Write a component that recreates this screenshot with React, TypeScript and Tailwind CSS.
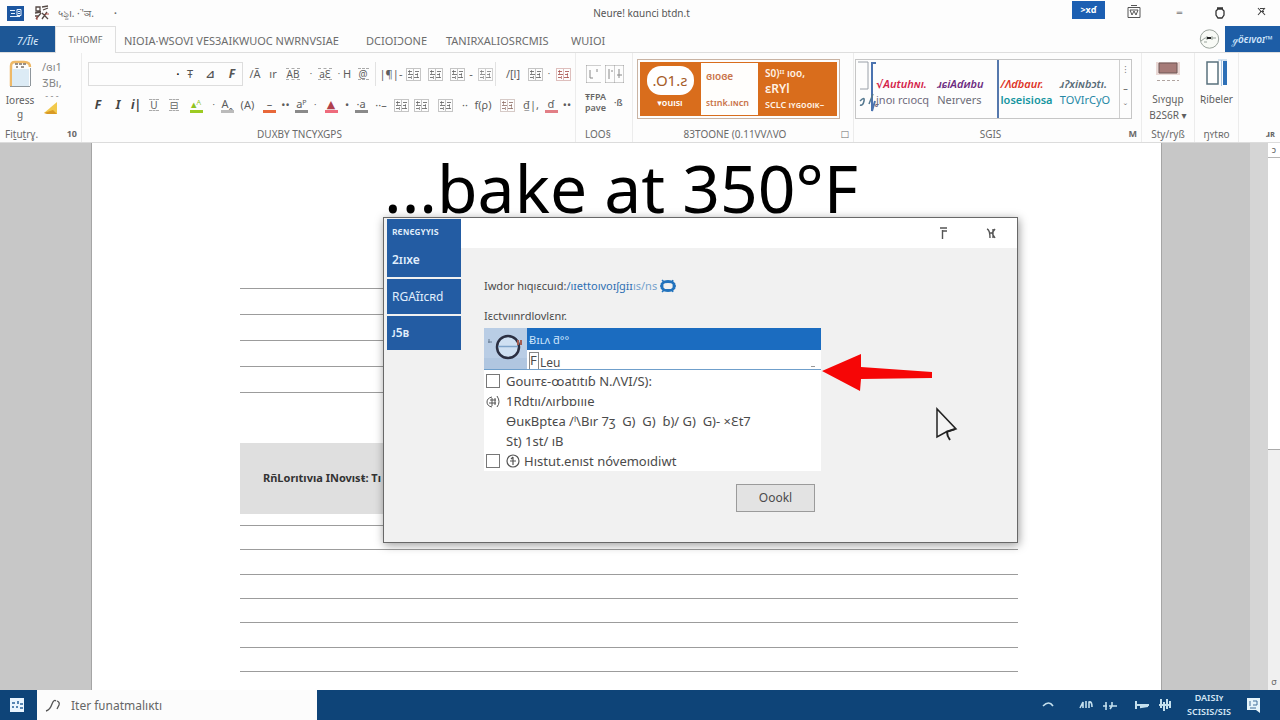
import React from "react";

type Tool = { w: string; t?: string; k?: "grid" | "sep" | "dot" | "bold" | "box"; bar?: string; c?: string };

const fontTop: Tool[] = [
  { w: "w-6", t: "/Ã" },
  { w: "w-3", t: "ır" },
  { w: "w-7", t: "AB", k: "box" },
  { w: "w-2", k: "dot" },
  { w: "w-5", t: "aƐ", k: "box" },
  { w: "w-2", k: "dot" },
  { w: "w-2", t: "H" },
  { w: "w-6", t: "@", k: "box" },
  { w: "w-1", k: "sep" },
  { w: "w-6", t: "|¶|-" },
  { w: "w-5", k: "grid" },
  { w: "w-6", k: "grid" },
  { w: "w-5", k: "grid" },
  { w: "w-2", t: "-" },
  { w: "w-5", k: "grid", c: "text-[#777777]" },
  { w: "w-1", k: "sep" },
  { w: "w-7", t: "/[l]" },
  { w: "w-4", k: "grid" },
  { w: "w-3", k: "dot" },
  { w: "w-4", k: "grid", c: "text-[#a34a44]" },
];

const fontBottom: Tool[] = [
  { w: "w-5", t: "F", k: "bold" },
  { w: "w-5", t: "I", k: "bold" },
  { w: "w-4", t: "i|", k: "bold" },
  { w: "w-5", t: "U", k: "box" },
  { w: "w-5", t: "⊟", k: "box" },
  { w: "w-6", t: "▴ᴬ", c: "text-[#8fc31f]", bar: "bg-[#9ccb22]" },
  { w: "w-3", k: "dot" },
  { w: "w-4", t: "Aꞈ", bar: "bg-[#bbbbbb]" },
  { w: "w-6", t: "(A)" },
  { w: "w-5", t: "–", bar: "bg-[#e8683a]" },
  { w: "w-3", t: "••" },
  { w: "w-5", t: "aᴾ", bar: "bg-[#8a8a8a]" },
  { w: "w-2", k: "dot" },
  { w: "w-6", t: "▲", c: "text-[#b0404c]", bar: "bg-[#ee6b7c]" },
  { w: "w-2", t: "•" },
  { w: "w-5", t: "·a", bar: "bg-[#8a8a8a]" },
  { w: "w-5", t: "··–" },
  { w: "w-5", k: "grid" },
  { w: "w-5", k: "grid" },
  { w: "w-7", k: "grid" },
  { w: "w-3", t: "··" },
  { w: "w-6", t: "f(ρ)" },
  { w: "w-6", k: "grid", c: "text-[#8c6a62]" },
  { w: "w-6", t: "₫|," },
  { w: "w-4", t: "ɗ", bar: "bg-[#e27f86]" },
  { w: "w-4", t: "••" },
];

function GridIcon() {
  return (
    <svg width="17" height="15" viewBox="0 0 17 15" fill="none" stroke="currentColor" aria-hidden="true">
      <path d="M1 1.5h15M1 13.5h15" opacity=".35" />
      <path d="M3 4.5h4M10 4.5h4M3 7.500h5M10 7.500h3M3 10.500h3M9 10.500h5" opacity=".8" />
      <path d="M1.500 2v11M8.500 2v11M15.500 2v11" opacity=".35" />
      <path d="M4.500 3v4M12.500 6v5M6.500 9v3" opacity=".6" />
    </svg>
  );
}

function ToolCell({ tool, name }: { tool: Tool; name: string }) {
  if (tool.k === "sep") return <span className={`${tool.w} h-6 border-l border-[#e2e2e2]`} />;
  if (tool.k === "dot") return <span className={`${tool.w} text-center text-[9px] text-[#666666]`}>·</span>;
  return (
    <button
      aria-label={name}
      className={`${tool.w} ${tool.c ?? "text-[#5d5d5d]"} flex h-5 shrink-0 flex-col items-center justify-center overflow-hidden whitespace-nowrap text-[11px] leading-3`}
    >
      {tool.k === "grid" ? (
        <GridIcon />
      ) : tool.k === "bold" ? (
        <span className="text-[12px] font-bold text-[#444444] italic">{tool.t}</span>
      ) : tool.k === "box" ? (
        <span className="border-y border-dashed border-[#aaaaaa] px-px text-[10px] leading-[10px]">{tool.t}</span>
      ) : (
        tool.t
      )}
      {tool.bar && <span className={`${tool.bar} h-[3px] w-[13px] shrink-0`} />}
    </button>
  );
}

function Group({
  className,
  label,
  mark,
  labelClass = "justify-center",
  children,
}: {
  className: string;
  label: string;
  mark?: string;
  labelClass?: string;
  children?: React.ReactNode;
}) {
  return (
    <section className={`flex shrink-0 flex-col border-r border-[#ececec] ${className}`}>
      <div className="flex-1 pt-[6px]">{children}</div>
      <div className={`relative flex h-4 items-center text-[10px] leading-4 text-[#6a6a6a] ${labelClass}`}>
        {label}
        {mark && <span className="absolute right-1 text-[9px] font-bold">{mark}</span>}
      </div>
    </section>
  );
}

function TitleBar() {
  return (
    <header className="flex h-[26px] items-center justify-between bg-[#fdfdfd]">
      <div className="flex flex-1 items-center pl-[7px] text-[#666666]">
        <svg width="17" height="15" viewBox="0 0 17 15" aria-hidden="true">
          <path fill="#1c56a0" d="M0 0h17v15H0z" />
          <path stroke="#e6f0fc" d="M3 4.5h5M4 7.5h4M3 10.5h10M10 3.5h4v6h-4zM11 5.5h2M11 7.5h2" fill="none" />
        </svg>
        <svg className="ml-[10px]" width="16" height="16" viewBox="0 0 16 16" fill="none" stroke="#564a46" aria-hidden="true">
          <path d="M2 2h4v4H2zM8 2l6-1M9 5l5-2M1 8l6-1M2 14l5-6M8 8l6 6M13 7l-5 7M1 11h4" strokeWidth="1.3" />
          <path d="M3 11v4M11 9h4" stroke="#b55249" />
        </svg>
        <span className="ml-2 text-[10px]">५ৡı. ·˙'ञ.</span>
        <span className="ml-5 text-[10px] font-bold">·</span>
      </div>
      <h1 className="pr-1 text-[10px] text-[#555555]">Neure! kαunci btdn.t</h1>
      <div className="flex flex-1 items-center justify-end text-[#454545]">
        <button className="mr-8 -mt-[6px] h-[18px] w-[33px] bg-[#1c5fb2] text-[9px] font-bold text-white">&gt;xɗ</button>
        <button aria-label="Ribbon display" className="mr-[34px] -ml-[10px] -mt-1">
          <svg width="14" height="13" viewBox="0 0 14 13" fill="none" stroke="#555" aria-hidden="true">
            <path d="M1 2.500h12v10H1zM4 .5h6M3 5l2 5 2-4 2 4 2-5M3 5h8" />
          </svg>
        </button>
        <button aria-label="Minimize" className="mr-[31px] w-[9px] text-[9px] text-[#777777]">═</button>
        <button aria-label="Maximize" className="mr-8">
          <svg width="10" height="12" viewBox="0 0 10 12" fill="none" stroke="#333" strokeWidth="1.3" aria-hidden="true">
            <path d="M3 2h4l2 2v4l-2 3H3L1 8V4zM2 1h6" />
          </svg>
        </button>
        <button aria-label="Close" className="mr-[14px] -mt-1">
          <svg width="9" height="9" viewBox="0 0 9 9" fill="none" stroke="#444" strokeWidth="1.1" aria-hidden="true">
            <path d="M1 1l3 3.500L1 8M8 1L5 4.500 8 8M3 1.500h4M3 4.500h4" />
          </svg>
        </button>
      </div>
    </header>
  );
}

function TabRow() {
  return (
    <nav className="flex h-[27px] items-stretch border-b border-[#dedede] bg-[#fdfdfd] text-[11px] text-[#6c6c6c]">
      <button className="w-[55px] bg-[#1d5796] pt-1 text-[11px] text-[#d8e9fb] italic">7/Ĩlє</button>
      <button className="-mb-px w-[61px] border border-b-0 border-[#dedede] bg-[#fdfdfd] text-[9px]">TıHOMF</button>
      <button className="ml-2 w-[218px] pt-1 text-left whitespace-nowrap">NIOIA·WSOVI VES3AIKWUOC NWRNVSIAE</button>
      <button className="ml-6 w-[60px] pt-1 text-left whitespace-nowrap">DCIOIƆONE</button>
      <button className="ml-5 w-[105px] pt-1 text-left whitespace-nowrap">TANIRXALIOSRCMIS</button>
      <button className="ml-5 pt-1 text-left">WUIOI</button>
      <div className="flex-1" />
      <button aria-label="Account" className="mr-[5px] self-center">
        <svg width="21" height="20" viewBox="0 0 21 20" fill="none" stroke="#9aa39c" aria-hidden="true">
          <circle cx="10.500" cy="10" r="9.200" fill="#f8faf6" />
          <path d="M2 12l4-3M6 9h11M8 7v4M13 7v4M5 13h3" />
          <path stroke="#222" strokeWidth="2" d="M8 9h4" />
        </svg>
      </button>
      <button className="w-[55px] bg-[#1d5da6] text-[10px] font-semibold text-[#cfe4fb] italic">ℊöєıvoɪ™</button>
    </nav>
  );
}

const gallery = [
  { top: "√Autuhɴı.", low: "ʝnoı rcıocq", a: "text-[#d41f4a]", b: "text-[#6f6a7c]" },
  { top: "ɹɕiAɗᴎbu", low: "Neɪrvers", a: "text-[#6b2a80]", b: "text-[#6d6d78]" },
  { top: "/Ʌɗbaur.", low: "loseisiosa", a: "text-[#dd3327]", b: "font-semibold text-[#1595a0]" },
  { top: "ɹʔxiɴbɔtı.", low: "TOVIrCyO", a: "text-[#586c78]", b: "text-[#2487a5]" },
];

function Ribbon() {
  return (
    <div className="flex h-[90px] border-b border-[#dcdcdc] bg-[#fdfdfd]">
      <Group className="w-[82px]" label="Fiṯuṯrɣ." mark="10" labelClass="pl-[5px]">
        <div className="flex pl-[6px]">
          <button className="flex w-7 flex-col items-center text-[10px] leading-3 text-[#5f5f5f]">
            <svg width="26" height="30" viewBox="0 0 26 30" fill="none" aria-hidden="true">
              <path d="M4 27V7q0-4 4-4h9q6 0 6 5" stroke="#eeb968" strokeWidth="2.500" />
              <path d="M7 10h15v17H5V10z" fill="#dcebf5" />
              <path d="M8 5h12M9 8h2M14 8h4" stroke="#7b7067" strokeWidth="1.500" strokeDasharray="3 1" />
              <path d="M23.500 9v18M3 27.500h20" stroke="#8e969c" />
            </svg>
            <span className="mt-[5px]">Ioress</span>
            <span className="mt-[2px]">g</span>
          </button>
          <div className="ml-2 flex flex-col items-center text-[11px] leading-4 text-[#858585]">
            <span>/ɞı1</span>
            <span>ƷBı,</span>
            <span className="text-[9px] leading-[10px]">- - -</span>
            <svg width="17" height="14" viewBox="0 0 17 14" aria-hidden="true">
              <path fill="#f2c94b" d="M1 12L14 1v12z" />
              <path fill="#d99a25" d="M1 12l9-3 4 4H4z" />
            </svg>
          </div>
        </div>
      </Group>
      <Group className="w-[494px]" label="DUXBY TNCYXGPS" labelClass="justify-center pr-[58px]">
        <div className="flex h-[30px] items-center pl-[6px]">
          <div className="flex h-6 w-[155px] items-center border border-[#dddddd]">
            <input aria-label="Font name" className="h-5 w-[83px] bg-transparent text-[11px] outline-none" />
            <span className="w-3 text-center text-[10px] font-bold">·</span>
            <span className="w-3 text-center text-[11px] text-[#555555]">Ŧ</span>
            <span className="w-[28px] text-center text-[11px] font-bold text-[#555555] italic">⊿</span>
            <span className="w-4 text-center text-[12px] font-bold text-[#555555] italic">F</span>
          </div>
          {fontTop.map((tool, i) => (
            <ToolCell key={i} tool={tool} name={`Format ${i + 1}`} />
          ))}
        </div>
        <div className="flex h-[32px] items-center pl-[6px]">
          {fontBottom.map((tool, i) => (
            <ToolCell key={i} tool={tool} name={`Style ${i + 1}`} />
          ))}
        </div>
      </Group>
      <Group className="w-[57px]" label="LOO§" labelClass="pl-[9px]">
        <div className="flex h-[30px] items-center pl-[9px] text-[#888888]">
          <svg width="40" height="20" viewBox="0 0 40 20" fill="none" stroke="currentColor" aria-hidden="true">
            <path d="M1 1.500h15M1 18.500h15M20 1.500h19M20 18.500h19M1.500 1v18M20.500 1v18M38.500 1v18M29.500 1v18" opacity=".4" />
            <path d="M5 6v8M5 14h3M12 5v3M24 5v10M26 7h2M34 5v9M32 11h5" />
          </svg>
        </div>
        <div className="flex items-center gap-2 pt-[2px] pl-[9px] text-[9px] leading-[11px] font-semibold text-[#666666]">
          <span>ŦFPA<br />ƿave</span>
          <span>·ß</span>
        </div>
      </Group>
      <Group className="w-[221px]" label="83TOONE (0.11VVΛVO" mark="□" labelClass="justify-center pr-4">
        <div className="ml-1 flex h-[60px] w-[203px] border border-[#c9b3a3] p-[2px] text-[10px] font-semibold">
          <button className="flex w-[60px] flex-col items-center bg-[#d96d1c] pt-1 text-white">
            <span className="flex h-[29px] w-[47px] items-center justify-center rounded-[14px] bg-white text-[15px] font-normal text-[#a65c28]">
              .O1.ƨ
            </span>
            <span className="mt-px text-[9px]">▾ouısı</span>
          </button>
          <button className="flex flex-1 flex-col items-start justify-around border border-[#d96d1c] bg-[#fffefc] pl-[5px] text-[#c9744a]">
            <span>ɞıoɞe</span>
            <span className="text-[9px]">ꜱtɪnk.ıɴcn</span>
          </button>
          <button className="flex w-[78px] flex-col items-start justify-center bg-[#d96d1c] pl-[6px] leading-4 text-[#fff2e5]">
            <span>S0)ᴵᴵ ıoo,</span>
            <span className="text-[12px]">ɛRYl</span>
            <span className="text-[9px]">SCLC ıʏɢooıᴋ–</span>
          </button>
        </div>
      </Group>
      <Group className="w-[288px]" label="SGIS" mark="M" labelClass="justify-center pr-[14px]">
        <div className="ml-px flex h-[60px] w-[277px] border border-[#c6c6c6]">
          <div className="w-[18px] shrink-0">
            <svg width="20" height="56" viewBox="0 0 20 56" fill="none" aria-hidden="true">
              <path d="M12 2v27H4M12 2H2" stroke="#9aa0a8" />
              <path d="M15 3h6M16 4v47l3-10" stroke="#4b73b0" strokeWidth="2" />
              <path d="M4 41q5-5 4 0t-4 4M13 44l4-10" stroke="#54788f" strokeWidth="1.500" />
            </svg>
          </div>
          <div className="grid flex-1 grid-cols-4">
            {gallery.map((g, i) => (
              <button
                key={i}
                className={`flex min-w-0 flex-col items-start justify-center pt-[5px] pl-[2px] text-[11px] leading-4 whitespace-nowrap ${i === 2 ? "border-l-2 border-[#5578ad]" : ""}`}
              >
                <span className={`font-semibold italic ${g.a}`}>{g.top}</span>
                <span className={g.b}>{g.low}</span>
              </button>
            ))}
          </div>
          <div className="flex w-3 flex-col items-center justify-around border-l border-[#cfcfcf] text-[9px] leading-3 text-[#777777]">
            <span>⁝</span>
            <span className="font-bold">–</span>
            <span>ˇ</span>
          </div>
        </div>
      </Group>
      <Group className="w-[53px]" label="Sty/ryß">
        <button className="flex w-full flex-col items-center text-[10px] leading-4 text-[#606060]">
          <svg width="26" height="26" viewBox="0 0 26 26" fill="none" aria-hidden="true">
            <path fill="#ead8d5" d="M1 3h24v13H1z" />
            <path d="M4 4h18v10H4z" fill="#a67b78" stroke="#6f5957" />
            <path d="M2 21.500h22" stroke="#b0a4a0" strokeDasharray="3 2" />
          </svg>
          <span className="mt-[6px]">Sıʏgųp</span>
          <span>B2S6R ▾</span>
        </button>
      </Group>
      <Group className="w-[44px]" label="ŋʏtʀo">
        <button className="flex w-full flex-col items-center text-[10px] leading-4 text-[#606060]">
          <svg width="24" height="28" viewBox="0 0 24 28" fill="none" aria-hidden="true">
            <path d="M2 3h11v22H2z" fill="#fff" stroke="#59717e" strokeWidth="1.500" />
            <path fill="#2d70b7" d="M18 2h4v24h-4z" />
            <path d="M16.500 1v26M13 1h9" stroke="#abc8e3" />
          </svg>
          <span className="mt-1">Ʀiɓeler</span>
        </button>
      </Group>
      <div className="flex flex-1 items-end justify-end pr-[5px] pb-[2px] text-[9px] font-bold text-[#666666]">ɹʀ</div>
    </div>
  );
}

function Rule() {
  return <div className="h-px shrink-0 bg-[#9c9c9c]" />;
}

function Page() {
  return (
    <main className="flex-1 border-x border-[#a5a5a5] bg-white pr-[143px] pl-[148px]">
      <h2 className="flex h-[145px] justify-center pr-4 text-[66px] leading-[88px] whitespace-nowrap text-black">...bake at 350°F</h2>
      <div className="flex h-[105px] flex-col justify-between">
        {[0, 1, 2, 3, 4].map((n) => <Rule key={n} />)}
      </div>
      <div className="mt-[50px] flex h-[71px] items-center bg-[#dfdfdf] pl-[23px] text-[11px] font-bold text-[#333333]">
        RñLorıtıvıa INovısŧ: Tı
      </div>
      <div className="mt-[11px] flex h-[147px] flex-col justify-between">
        {[0, 1, 2, 3, 4, 5, 6].map((n) => <Rule key={n} />)}
      </div>
    </main>
  );
}

function OptionRow({ id, lead, children }: { id: string; lead: "check" | "mark" | "none"; children: React.ReactNode }) {
  return (
    <li className="flex h-5 items-center gap-[6px] pl-[2px]">
      {lead === "check" && <input id={id} type="checkbox" className="h-[14px] w-[14px] shrink-0 appearance-none border border-[#777777] bg-white" />}
      {lead === "mark" && (
        <svg width="14" height="13" viewBox="0 0 14 13" fill="none" stroke="#555" aria-hidden="true">
          <path d="M6 2q-5 1-5 5t5 5M4 5h6M3 8h7M6 3v8M9 3v7M11 1q4 6 0 11" />
        </svg>
      )}
      {lead === "none" && <span className="w-[14px]" />}
      {lead === "check" ? <label htmlFor={id} className="flex items-center">{children}</label> : <span>{children}</span>}
    </li>
  );
}

function Dialog() {
  return (
    <div role="dialog" aria-label="Options" className="absolute top-[74px] left-[383px] flex h-[326px] w-[635px] border border-[#686868] bg-[#f1f1f1] pl-[3px] shadow-[1px_2px_9px_rgba(0,0,0,0.4)]">
      <nav className="flex w-[74px] shrink-0 flex-col gap-[2px] pt-px text-[12px] text-[#e0eefc]">
        <div className="flex h-[58px] flex-col bg-[#235ca3] pl-[5px]">
          <button className="h-6 text-left text-[10px] font-semibold">ʀєɴєɢʏʏıs</button>
          <button className="h-[34px] text-left font-semibold">2ɪıxe</button>
        </div>
        <button className="h-[35px] bg-[#235ca3] pl-[5px] text-left">RGAɪ̃ɪcʀd</button>
        <button className="h-[34px] bg-[#235ca3] pl-[5px] text-left font-semibold">ᴊ5ʙ</button>
      </nav>
      <div className="flex flex-1 flex-col">
        <div className="flex h-[30px] items-center justify-end bg-white pr-5 text-[#555555]">
          <button aria-label="Help" className="mr-[38px]">
            <svg width="9" height="12" viewBox="0 0 9 12" fill="none" stroke="#555" strokeWidth="1.400" aria-hidden="true">
              <path d="M1 1h7M3.500 3v9M3 4h5" />
            </svg>
          </button>
          <button aria-label="Close dialog">
            <svg width="11" height="11" viewBox="0 0 11 11" fill="none" stroke="#555" strokeWidth="1.400" aria-hidden="true">
              <path d="M1 1q3 1 3 9M9 1L6 5l3 5M7 1v9M4 5h3" />
            </svg>
          </button>
        </div>
        <div className="pt-[30px] pl-[23px] text-[#4b4b4b]">
          <p className="flex h-4 items-center text-[11px] whitespace-nowrap">
            Iwdor hıqıɛcuıd:
            <a href="#sources" className="text-[#2f70b3]">/ıɪettoıvoɪʃɡɪ̇ɪ<span className="text-[#76a2cc]">ıs/ns</span></a>
            <svg className="ml-[2px]" width="18" height="16" viewBox="0 0 18 16" fill="none" stroke="#2273bd" strokeWidth="2.800" aria-hidden="true">
              <path d="M5 4q4-1 8 0l2 2v4l-2 2q-4 1-8 0l-2-2V6z" />
              <path d="M3 2l2 2M14 2l-1 2M3 14l2-2M14 14l-1-2M1 8h2M15 8h2" strokeWidth="1.500" />
            </svg>
          </p>
          <label htmlFor="entry" className="mt-[14px] block h-[16px] text-[11px] leading-4">Iɛctvıınrdlovlɛnr.</label>
          <div className="mt-1 w-[337px] bg-white">
            <div className="flex h-[42px] border-b border-[#6f9fcb]">
              <svg width="43" height="41" viewBox="0 0 43 41" fill="none" aria-hidden="true">
                <path fill="#b9cde5" d="M0 0h43v41H0z" />
                <path fill="#a7bfdb" d="M0 30h43v11H0z" opacity=".5" />
                <circle cx="24" cy="19" r="11" fill="#cfe0f2" stroke="#2b2f42" strokeWidth="2.500" />
                <path d="M14 18.500h20" stroke="#7fa4ca" strokeWidth="1.500" />
                <path d="M5 11v4M4 14h4" stroke="#64788f" />
                <path d="M34 12v5M37 12v5" stroke="#a45e52" strokeWidth="2" />
              </svg>
              <div className="flex flex-1 flex-col">
                <input id="entry" defaultValue="Ƀɪʟʌ ƌ°°" className="h-[22px] w-full bg-[#1b6cc0] pl-[2px] text-[11px] text-[#c9e2fb] outline-none" />
                <div className="flex flex-1 items-end pl-[2px]">
                  <span className="flex h-[17px] w-[10px] items-center border border-b-0 border-[#888888] text-[13px]">F</span>
                  <select aria-label="File kind" className="h-[13px] flex-1 appearance-none bg-transparent pl-px text-[12px] leading-[13px] outline-none">
                    <option>Leu</option>
                  </select>
                  <span className="mr-[6px] h-[3px] w-1 border-t border-[#999999]" />
                </div>
              </div>
            </div>
            <ul className="pt-px text-[13px] leading-5 whitespace-nowrap">
              <OptionRow id="o1" lead="check">Gouıᴛɛ-ꝏatıtıɓ N.ɅVI/S):</OptionRow>
              <OptionRow id="o2" lead="mark">1Rdtıı/ʌırbɒıııe</OptionRow>
              <OptionRow id="o3" lead="none">ƟuᴋBptєa /ˡ\Bır 7ʒ&nbsp; G)&nbsp; G)&nbsp; ɓ)/ G)&nbsp; G)- ×Ɛt7</OptionRow>
              <OptionRow id="o4" lead="none">St) 1st/ ıB</OptionRow>
              <OptionRow id="o5" lead="check">
                <svg className="mr-1" width="14" height="14" viewBox="0 0 14 14" fill="none" stroke="#555" strokeWidth="1.200" aria-hidden="true">
                  <circle cx="7" cy="7" r="6" />
                  <path d="M7 3v8M4 7h6M5 5l2-2" />
                </svg>
                Hıstut.enıst nóvemoıdiwt
              </OptionRow>
            </ul>
          </div>
          <button className="mt-[13px] ml-[252px] h-7 w-[79px] border border-[#9b9b9b] bg-[#e3e3e3] text-[12px]">Oookl</button>
        </div>
      </div>
    </div>
  );
}

function Workspace() {
  return (
    <div className="relative flex flex-1 overflow-hidden bg-[#c7c7c7]">
      <div className="w-[91px] shrink-0" />
      <Page />
      <div className="w-[88px] shrink-0" />
      <div className="w-[18px] shrink-0 bg-[#d5d5d5]" />
      <div className="flex w-3 shrink-0 flex-col bg-[#f0f0f0] text-center text-[9px] leading-[14px] text-[#666666]">
        <span className="h-[15px] border-b border-[#b5b5b5] bg-white">ɔ</span>
        <span className="h-[292px] border-b border-[#aaaaaa] bg-white" />
        <span className="flex-1" />
        <span className="h-[15px]">σ</span>
      </div>
      <Dialog />
      <svg className="pointer-events-none absolute top-[210px] left-[820px]" width="114" height="40" viewBox="0 0 114 40" aria-hidden="true">
        <path fill="#f60606" d="M2 18L41 1v13l71 5v6l-71 1-1 12z" />
      </svg>
      <svg className="pointer-events-none absolute top-[264px] left-[935px]" width="24" height="36" viewBox="0 0 24 36" fill="none" stroke="#222" strokeWidth="1.500" aria-hidden="true">
        <path fill="#f4f4f4" d="M2 2v28l9-5 10-3z" />
        <path d="M12 25q0 4 3 8M11 25l9-3" strokeWidth="2" />
      </svg>
    </div>
  );
}

function Taskbar() {
  return (
    <footer className="flex h-[30px] items-stretch bg-[#0e4478] text-[#d5e6f5]">
      <button aria-label="Start" className="flex w-[37px] items-center justify-center pr-1">
        <svg width="14" height="14" viewBox="0 0 14 14" aria-hidden="true">
          <path fill="#e9f5fe" d="M0 0h14v14H0z" />
          <path d="M2 5h3M8 3v3M10 6h3M2 9h2M6 9h2M10 10h3" stroke="#26619a" strokeWidth="1.500" />
        </svg>
      </button>
      <label className="flex w-[280px] items-center bg-[#fcfcfc] pt-[2px] pl-2">
        <svg width="16" height="14" viewBox="0 0 16 14" fill="none" stroke="#555" strokeWidth="1.300" aria-hidden="true">
          <path d="M1 12q4-1 6-7 2-5 4-3M12 2q3 1 2 4l-2 4" />
        </svg>
        <input aria-label="Search" defaultValue="Iter fᴜnatmalıĸtı" className="ml-[10px] w-[200px] bg-transparent text-[12px] text-[#666666] outline-none" />
      </label>
      <div className="flex-1" />
      <div className="flex items-center">
        <svg width="134" height="16" viewBox="0 0 134 16" fill="none" stroke="#c4e0ee" strokeWidth="1.600" aria-hidden="true">
          <path d="M1 9q6-6 10 0" />
          <path d="M38 11l3-6v6M44 4v7M47 11V5q3-1 3 5" />
          <path d="M61 9h4M64 5v8M67 9h8M70 5v4M68 12l2-3" />
          <path d="M94 4v8M95 8h12M99 7v3l7-1" strokeWidth="2" />
          <path d="M117 8h12M119 2v9M122 5v9M125 2v10M128 4v7" strokeWidth="2" />
        </svg>
        <div className="ml-[10px] flex w-[46px] flex-col items-center text-[9px] leading-[14px] font-semibold">
          <span>DAISIʏ</span>
          <span>SCISIS/SIS</span>
        </div>
        <button aria-label="Notifications" className="mr-[19px] ml-[14px]">
          <svg width="15" height="17" viewBox="0 0 15 17" aria-hidden="true">
            <path fill="#e6f4fb" d="M1 1h13v15l-4-3H1z" />
            <path d="M4 4v5M7 4h4v4H7M4 11h6" stroke="#42719c" fill="none" />
          </svg>
        </button>
      </div>
    </footer>
  );
}

export default function App() {
  return (
    <div className="flex min-h-screen flex-col bg-white font-['Noto_Sans','DejaVu_Sans',sans-serif]">
      <TitleBar />
      <TabRow />
      <Ribbon />
      <Workspace />
      <Taskbar />
    </div>
  );
}
